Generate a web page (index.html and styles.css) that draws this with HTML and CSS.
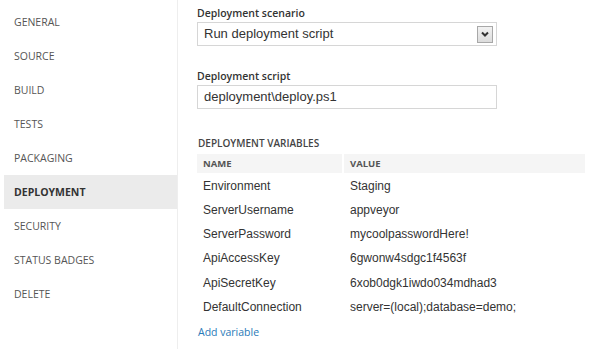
FILE: index.html
```html
<!DOCTYPE html>
<html lang="en">
<head>
    <meta charset="UTF-8">
    <title>Project Settings - Deployment</title>
    <link rel="stylesheet" href="styles.css">
</head>
<body>

    <div class="layout">
        <ul class="sidebar">
            <li>General</li>
            <li>Source</li>
            <li>Build</li>
            <li>Tests</li>
            <li>Packaging</li>
            <li class="active">Deployment</li>
            <li>Security</li>
            <li>Status badges</li>
            <li>Delete</li>
        </ul>

        <div class="main">
            <label class="field-label">Deployment scenario</label>
            <div class="select">
                <span>Run deployment script</span>
                <span class="select-btn">
                    <svg width="8" height="6" viewBox="0 0 8 6"><path d="M1 1.5 L4 4.5 L7 1.5" fill="none" stroke="#333" stroke-width="2"/></svg>
                </span>
            </div>

            <label class="field-label second">Deployment script</label>
            <div class="input">deployment\deploy.ps1</div>

            <h3 class="section-title">Deployment variables</h3>
            <table class="vars">
                <thead>
                    <tr><th class="col-name">Name</th><th>Value</th></tr>
                </thead>
                <tbody>
                    <tr><td>Environment</td><td>Staging</td></tr>
                    <tr><td>ServerUsername</td><td>appveyor</td></tr>
                    <tr><td>ServerPassword</td><td>mycoolpasswordHere!</td></tr>
                    <tr><td>ApiAccessKey</td><td>6gwonw4sdgc1f4563f</td></tr>
                    <tr><td>ApiSecretKey</td><td>6xob0dgk1iwdo034mdhad3</td></tr>
                    <tr><td>DefaultConnection</td><td>server=(local);database=demo;</td></tr>
                </tbody>
            </table>
            <a class="add-link" href="#">Add variable</a>
        </div>
    </div>

</body>
</html>
```

FILE: styles.css
```css
body { margin: 0; font-family: "Open Sans", sans-serif; color: #333; background: #fff; }
.layout { display: flex; height: 349px; }

.sidebar { flex: none; box-sizing: border-box; list-style: none; margin: 0; padding: 5px 0 0 4px; width: 178px; border-right: 1px solid #eeeeee; }
.sidebar li { height: 34px; line-height: 34px; padding-left: 10px; font-size: 10.5px; text-transform: uppercase; color: #555; }
.sidebar li.active { background-color: #ebebeb; font-weight: 700; color: #333; }

.main { flex: none; padding: 5px 0 0 19px; width: 388px; }
.field-label { display: block; font-size: 10.5px; font-weight: 600; color: #333; height: 17px; line-height: 17px; }
.field-label.second { margin-top: 22px; }

.select, .input { height: 22px; border: 1px solid #d6d6d6; font-family: "Liberation Sans", Arial, sans-serif; font-size: 13px; line-height: 22px; padding: 0 0 0 6px; width: 292px; }
.select { display: flex; justify-content: space-between; align-items: center; }
.select-btn { width: 14px; height: 15px; margin-right: 3px; border: 1px solid #a8a8a8; background: linear-gradient(#f2f2f2, #dcdcdc); display: flex; align-items: center; justify-content: center; }

.section-title { margin: 26px 0 0 1px; font-size: 10px; font-weight: 600; text-transform: uppercase; color: #444; height: 17px; line-height: 17px; }

.vars { border-collapse: separate; border-spacing: 0; width: 388px; margin-top: 2px; }
.vars th { background-color: #f5f5f5; font-size: 9.5px; font-weight: 700; text-transform: uppercase; color: #555; text-align: left; height: 19px; padding: 0 0 0 6px; }
.vars th.col-name { width: 139px; border-right: 2px solid #fff; }
.vars td { font-family: "Liberation Sans", Arial, sans-serif; font-size: 12px; color: #333; line-height: 22.75px; padding: 1.5px 0 0 6px; }

.add-link { display: block; margin: 6px 0 0 1px; font-size: 10.5px; color: #2a7ab8; text-decoration: none; }
```
